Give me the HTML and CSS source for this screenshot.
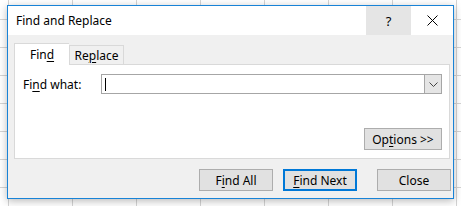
FILE: index.html
```html
<!DOCTYPE html>
<html lang="en">
<head>
  <meta charset="UTF-8">
  <title>Find and Replace</title>
  <link rel="stylesheet" href="styles.css">
</head>
<body>

  <div class="dialog">
    <div class="titlebar">
      <span class="title">Find and Replace</span>
      <div class="tb-btn help">?</div>
      <div class="tb-btn close">
        <svg width="11" height="11" viewBox="0 0 11 11">
          <path d="M0.5 0.5 L10.5 10.5 M10.5 0.5 L0.5 10.5" stroke="#000" stroke-width="1" fill="none"/>
        </svg>
      </div>
    </div>

    <div class="content">
      <div class="tabs">
        <div class="tab active">Fin<u>d</u></div>
        <div class="tab">Re<u>p</u>lace</div>
      </div>

      <div class="panel">
        <div class="field-row">
          <label class="field-label">Fi<u>n</u>d what:</label>
          <div class="combo">
            <span class="caret"></span>
            <div class="drop">
              <svg width="9" height="5" viewBox="0 0 9 5">
                <path d="M0.5 0.5 L4.5 4.5 L8.5 0.5" stroke="#444" stroke-width="1" fill="none"/>
              </svg>
            </div>
          </div>
        </div>
        <div class="options-row">
          <button class="btn options">Op<u>t</u>ions &gt;&gt;</button>
        </div>
      </div>

      <div class="actions">
        <button class="btn">F<u>i</u>nd All</button>
        <button class="btn default"><u>F</u>ind Next</button>
        <button class="btn">Close</button>
      </div>
    </div>
  </div>

</body>
</html>
```

FILE: styles.css
```css
body {
  margin: 0;
  padding: 5px 0 0 7px;
  width: 461px;
  height: 206px;
  box-sizing: border-box;
  overflow: hidden;
  font-family: 'Noto Sans', 'Open Sans', sans-serif;
  font-size: 12px;
  color: #000;
  background-color: #fff;
  background-image:
    linear-gradient(to right, #d4d4d4 1px, transparent 1px),
    linear-gradient(to bottom, #d4d4d4 1px, transparent 1px);
  background-size: 64px 28px;
  background-position: 8px 19px;
}

u {
  text-decoration-thickness: 1px;
  text-underline-offset: 2px;
}

.dialog {
  width: 447px;
  height: 194px;
  box-sizing: border-box;
  border: 1px solid #1883d7;
  background-color: #f0f0f0;
  box-shadow: 0 2px 8px rgba(0, 0, 0, 0.28);
}

.titlebar {
  height: 29px;
  display: flex;
  align-items: center;
  background-color: #fff;
}

.title {
  padding-left: 8px;
  font-size: 12px;
  flex: 1;
}

.tb-btn {
  height: 29px;
  display: flex;
  align-items: center;
  justify-content: center;
}

.help {
  width: 45px;
  background-color: #e5e5e5;
  font-size: 13px;
}

.close {
  width: 42px;
}

.content {
  padding: 8px 0 0 6px;
}

.tabs {
  display: flex;
  align-items: flex-end;
  height: 21px;
}

.tab {
  height: 19px;
  box-sizing: border-box;
  padding: 0 8px;
  border: 1px solid #d9d9d9;
  border-bottom: none;
  background-color: #f0f0f0;
  display: flex;
  align-items: center;
  justify-content: center;
}

.tab.active {
  width: 55px;
  height: 22px;
  margin-bottom: -1px;
  background-color: #fff;
  border-right: none;
  position: relative;
  z-index: 1;
}

.tab + .tab {
  width: 55px;
}

.panel {
  width: 436px;
  height: 95px;
  box-sizing: border-box;
  border: 1px solid #d9d9d9;
  background-color: #fff;
  padding: 9px 7px 0 8px;
}

.field-row {
  display: flex;
  align-items: center;
}

.field-label {
  width: 78px;
}

.combo {
  width: 341px;
  height: 20px;
  box-sizing: border-box;
  border: 1px solid #a6a6a6;
  display: flex;
  align-items: center;
  justify-content: space-between;
}

.caret {
  width: 1px;
  height: 13px;
  margin-left: 3px;
  background-color: #000;
}

.drop {
  width: 17px;
  height: 18px;
  box-sizing: border-box;
  border-left: 1px solid #a6a6a6;
  background-color: #e5e5e5;
  display: flex;
  align-items: center;
  justify-content: center;
}

.options-row {
  display: flex;
  justify-content: flex-end;
  margin-top: 34px;
}

.btn {
  font-family: inherit;
  font-size: 12px;
  color: #000;
  height: 22px;
  padding: 0;
  box-sizing: border-box;
  border: 1px solid #adadad;
  background-color: #e1e1e1;
}

.options {
  width: 78px;
}

.actions {
  display: flex;
  justify-content: flex-end;
  gap: 10px;
  margin-top: 10px;
  padding-right: 2px;
}

.actions .btn {
  width: 74px;
}

.actions .btn:nth-child(3) {
  margin-left: 10px;
}

.btn.default {
  border: 2px solid #0078d7;
}
```
